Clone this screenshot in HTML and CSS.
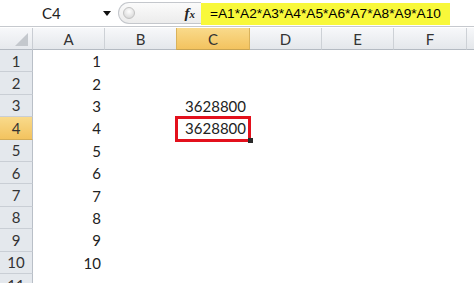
FILE: index.html
```html
<html>
<head>
<link rel="stylesheet" href="styles.css">
</head>
<body>

<div class="formula-bar">
    <div class="name-box">
        <span class="cell-ref">C4</span>
        <svg class="drop-arrow" width="8" height="5" viewBox="0 0 8 5"><path d="M0 0H8L4 5Z" fill="#111"/></svg>
    </div>
    <div class="fx-area">
        <span class="expander"></span>
        <span class="fx"><i>f</i><span class="fx-x">x</span></span>
    </div>
    <div class="formula">
        <span class="formula-text">=A1*A2*A3*A4*A5*A6*A7*A8*A9*A10</span>
    </div>
</div>

<div class="sheet" id="sheet">
    <div class="corner"><span class="corner-tri"></span></div>
    <div class="col-head">A</div>
    <div class="col-head">B</div>
    <div class="col-head selected">C</div>
    <div class="col-head">D</div>
    <div class="col-head">E</div>
    <div class="col-head">F</div>
    <div class="col-head"></div>
</div>

<script type="text/javascript">
(function() {
    var sheet = document.querySelector("#sheet"),
        values = {
            "3": { "C": "3628800" },
            "4": { "C": "3628800" }
        },
        cols = ["A", "B", "C", "D", "E", "F", "G"],
        html = "";

    for (var r = 1; r <= 11; r++) {
        html += '<div class="row-head' + (r == 4 ? ' selected' : '') + '">' + r + '</div>';
        for (var c = 0; c < cols.length; c++) {
            var text = "";
            if (cols[c] == "A" && r <= 10) {
                text = "" + r;
            }
            if (values[r] && values[r][cols[c]]) {
                text = values[r][cols[c]];
            }
            var cls = "cell";
            if (r == 4 && cols[c] == "C") {
                cls += " active";
            }
            html += '<div class="' + cls + '">' + text + '</div>';
        }
    }

    sheet.insertAdjacentHTML("beforeend", html);
})();
</script>
</body>
</html>
```

FILE: styles.css
```css
body {
    margin: 0;
    background-color: #ffffff;
    overflow: hidden;
    font-family: "Lato", "Liberation Sans", sans-serif;
}

/* formula bar */
.formula-bar {
    display: flex;
    height: 26px;
    border-bottom: 1px solid #c6c9ce;
    background-color: #ffffff;
}

.name-box {
    display: flex;
    align-items: center;
    width: 118px;
    padding-left: 42px;
    box-sizing: border-box;
}

.cell-ref {
    font-size: 15px;
    color: #222222;
    flex-grow: 1;
}

.drop-arrow {
    margin-right: 7px;
}

.fx-area {
    display: flex;
    align-items: center;
    justify-content: space-between;
    width: 83px;
    height: 22px;
    margin-top: 2px;
    padding: 0 4px 0 4px;
    box-sizing: border-box;
    border: 1px solid #c4c7cc;
    border-right: none;
    border-radius: 11px 0 0 11px;
    background: linear-gradient(#fbfbfb, #ececec);
}

.expander {
    display: block;
    width: 10px;
    height: 10px;
    border-radius: 50%;
    border: 1px solid #c2c2c2;
    background: radial-gradient(circle at 50% 35%, #ffffff 0, #e3e3e3 60%, #cfcfcf 100%);
}

.fx {
    font-family: "Liberation Serif", serif;
    font-weight: bold;
    font-size: 15px;
    color: #222222;
    margin-right: 2px;
}

.fx-x {
    font-size: 11px;
    font-style: italic;
}

.formula {
    flex-grow: 1;
    padding-top: 3px;
}

.formula-text {
    display: inline-block;
    height: 22px;
    line-height: 22px;
    width: 249px;
    padding-left: 9px;
    box-sizing: border-box;
    background-color: #f8f83a;
    font-family: "Liberation Sans", sans-serif;
    font-size: 13.7px;
    color: #000000;
}

/* grid */
.sheet {
    display: grid;
    grid-template-columns: 33px 72px 72px 73px 72px 72px 73px 72px;
    grid-template-rows: 22px;
    grid-auto-rows: 22.4px;
    margin-top: 1px;
}

.corner {
    position: relative;
    background: linear-gradient(#f7f8fa, #e6e9ed);
    border-right: 1px solid #c9cdd3;
    border-bottom: 1px solid #b4bac2;
}

.corner-tri {
    position: absolute;
    right: 4px;
    bottom: 3px;
    width: 0;
    height: 0;
    border-left: 13px solid transparent;
    border-bottom: 13px solid #c4c8cd;
}

.col-head {
    display: flex;
    align-items: center;
    justify-content: center;
    font-size: 15px;
    color: #333333;
    background: linear-gradient(#f7f8fa, #e4e7eb);
    border-right: 1px solid #cdd1d6;
    border-bottom: 1px solid #b4bac2;
}

.col-head.selected {
    background: linear-gradient(#f9da8b, #f3c35f);
    border-right: 1px solid #d9b25b;
    border-left: 1px solid #d9b25b;
    border-bottom: 1px solid #c9a452;
    margin-left: -1px;
}

.row-head {
    display: flex;
    align-items: center;
    justify-content: center;
    font-size: 15px;
    color: #333333;
    background-color: #e4e8ed;
    border-right: 1px solid #b9bfc7;
    border-bottom: 1px solid #c9ced5;
}

.row-head.selected {
    background: linear-gradient(#f9da8b, #f3c35f);
    border-bottom: 1px solid #d4ad58;
}

.cell {
    position: relative;
    display: flex;
    align-items: center;
    justify-content: flex-end;
    padding-right: 4px;
    font-size: 15px;
    color: #222222;
    white-space: nowrap;
}

.cell.active::after {
    content: "";
    position: absolute;
    left: -2px;
    top: -1px;
    right: -1px;
    bottom: -2px;
    border: 3px solid #e3101c;
}

.cell.active::before {
    content: "";
    position: absolute;
    right: -3px;
    bottom: -3px;
    width: 5px;
    height: 5px;
    background-color: #2a2a2a;
    z-index: 2;
}
```
